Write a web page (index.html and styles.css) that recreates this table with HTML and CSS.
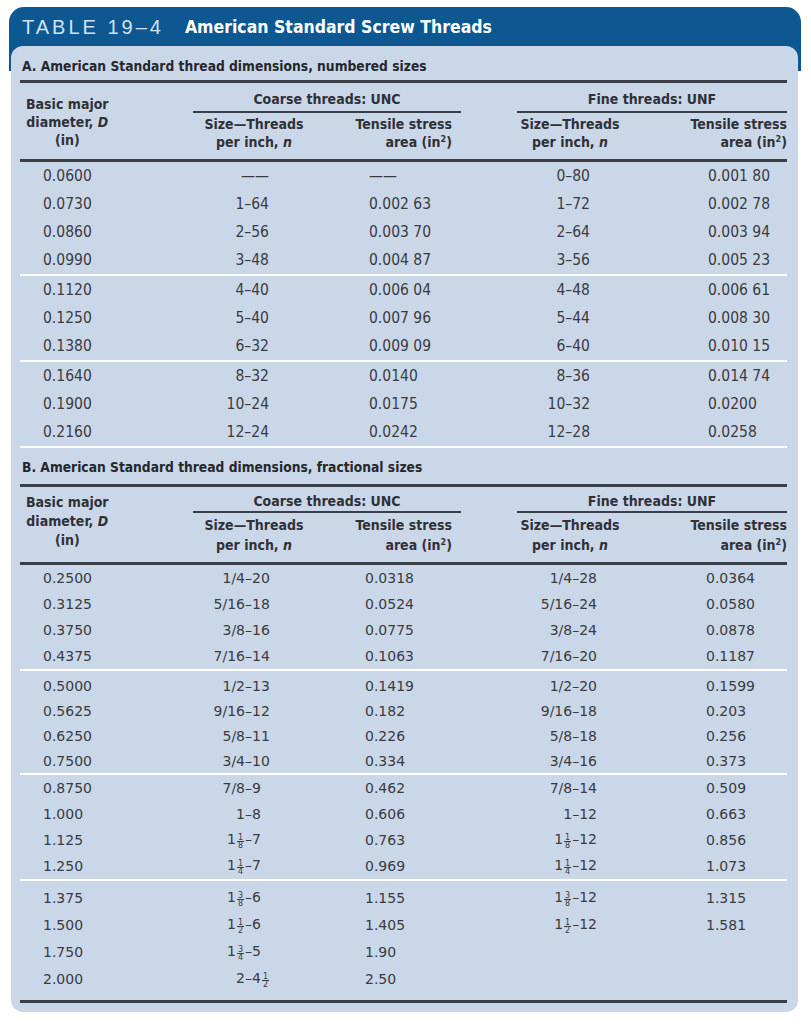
FILE: index.html
```html
<!DOCTYPE html>
<html lang="en">
<head>
<meta charset="utf-8">
<title>TABLE 19–4 American Standard Screw Threads</title>
<link rel="stylesheet" href="styles.css">
</head>
<body>
<div class="card">
  <div class="title"><span class="tnum">TABLE 19–4</span><span class="tname">American Standard Screw Threads</span></div>
  <div class="panel">
    <section class="tbl tbl-a">
      <h2 class="sec">A. American Standard thread dimensions, numbered sizes</h2>
      <div class="head">
        <div class="h-basic"><div class="basic-txt">Basic major<br>diameter, <i>D</i><br>(in)</div></div>
        <div class="grp grp-c">
          <div class="grp-title">Coarse threads: UNC</div>
          <div class="subs"><div class="sub-size">Size—Threads<br>per inch, <i>n</i></div><div class="sub-area">Tensile stress<br>area (in<sup>2</sup>)</div></div>
        </div>
        <div class="grp grp-f">
          <div class="grp-title">Fine threads: UNF</div>
          <div class="subs"><div class="sub-size">Size—Threads<br>per inch, <i>n</i></div><div class="sub-area">Tensile stress<br>area (in<sup>2</sup>)</div></div>
        </div>
      </div>
      <div class="body">
        <div class="rows">
          <div class="row"><span class="c1">0.0600</span><span class="c2">——</span><span class="c3">——</span><span class="c4">0–80</span><span class="c5">0.001 80</span></div>
          <div class="row"><span class="c1">0.0730</span><span class="c2">1–64</span><span class="c3">0.002 63</span><span class="c4">1–72</span><span class="c5">0.002 78</span></div>
          <div class="row"><span class="c1">0.0860</span><span class="c2">2–56</span><span class="c3">0.003 70</span><span class="c4">2–64</span><span class="c5">0.003 94</span></div>
          <div class="row"><span class="c1">0.0990</span><span class="c2">3–48</span><span class="c3">0.004 87</span><span class="c4">3–56</span><span class="c5">0.005 23</span></div>
        </div>
        <div class="rows">
          <div class="row"><span class="c1">0.1120</span><span class="c2">4–40</span><span class="c3">0.006 04</span><span class="c4">4–48</span><span class="c5">0.006 61</span></div>
          <div class="row"><span class="c1">0.1250</span><span class="c2">5–40</span><span class="c3">0.007 96</span><span class="c4">5–44</span><span class="c5">0.008 30</span></div>
          <div class="row"><span class="c1">0.1380</span><span class="c2">6–32</span><span class="c3">0.009 09</span><span class="c4">6–40</span><span class="c5">0.010 15</span></div>
        </div>
        <div class="rows">
          <div class="row"><span class="c1">0.1640</span><span class="c2">8–32</span><span class="c3">0.0140</span><span class="c4">8–36</span><span class="c5">0.014 74</span></div>
          <div class="row"><span class="c1">0.1900</span><span class="c2">10–24</span><span class="c3">0.0175</span><span class="c4">10–32</span><span class="c5">0.0200</span></div>
          <div class="row"><span class="c1">0.2160</span><span class="c2">12–24</span><span class="c3">0.0242</span><span class="c4">12–28</span><span class="c5">0.0258</span></div>
        </div>
      </div>
    </section>

    <section class="tbl tbl-b">
      <h2 class="sec">B. American Standard thread dimensions, fractional sizes</h2>
      <div class="head">
        <div class="h-basic"><div class="basic-txt">Basic major<br>diameter, <i>D</i><br>(in)</div></div>
        <div class="grp grp-c">
          <div class="grp-title">Coarse threads: UNC</div>
          <div class="subs"><div class="sub-size">Size—Threads<br>per inch, <i>n</i></div><div class="sub-area">Tensile stress<br>area (in<sup>2</sup>)</div></div>
        </div>
        <div class="grp grp-f">
          <div class="grp-title">Fine threads: UNF</div>
          <div class="subs"><div class="sub-size">Size—Threads<br>per inch, <i>n</i></div><div class="sub-area">Tensile stress<br>area (in<sup>2</sup>)</div></div>
        </div>
      </div>
      <div class="body">
        <div class="rows g1">
          <div class="row"><span class="c1">0.2500</span><span class="c2"><span class="l">1/4</span>–20</span><span class="c3">0.0318</span><span class="c4">1/4–28</span><span class="c5">0.0364</span></div>
          <div class="row"><span class="c1">0.3125</span><span class="c2"><span class="l">5/16</span>–18</span><span class="c3">0.0524</span><span class="c4">5/16–24</span><span class="c5">0.0580</span></div>
          <div class="row"><span class="c1">0.3750</span><span class="c2"><span class="l">3/8</span>–16</span><span class="c3">0.0775</span><span class="c4">3/8–24</span><span class="c5">0.0878</span></div>
          <div class="row"><span class="c1">0.4375</span><span class="c2"><span class="l">7/16</span>–14</span><span class="c3">0.1063</span><span class="c4">7/16–20</span><span class="c5">0.1187</span></div>
        </div>
        <div class="rows g2">
          <div class="row"><span class="c1">0.5000</span><span class="c2"><span class="l">1/2</span>–13</span><span class="c3">0.1419</span><span class="c4">1/2–20</span><span class="c5">0.1599</span></div>
          <div class="row"><span class="c1">0.5625</span><span class="c2"><span class="l">9/16</span>–12</span><span class="c3">0.182</span><span class="c4">9/16–18</span><span class="c5">0.203</span></div>
          <div class="row"><span class="c1">0.6250</span><span class="c2"><span class="l">5/8</span>–11</span><span class="c3">0.226</span><span class="c4">5/8–18</span><span class="c5">0.256</span></div>
          <div class="row"><span class="c1">0.7500</span><span class="c2"><span class="l">3/4</span>–10</span><span class="c3">0.334</span><span class="c4">3/4–16</span><span class="c5">0.373</span></div>
        </div>
        <div class="rows g3">
          <div class="row"><span class="c1">0.8750</span><span class="c2"><span class="l">7/8</span>–9</span><span class="c3">0.462</span><span class="c4">7/8–14</span><span class="c5">0.509</span></div>
          <div class="row"><span class="c1">1.000</span><span class="c2"><span class="l">1</span>–8</span><span class="c3">0.606</span><span class="c4">1–12</span><span class="c5">0.663</span></div>
          <div class="row"><span class="c1">1.125</span><span class="c2"><span class="l">1<span class="frac"><span>1</span><span>8</span></span></span>–7</span><span class="c3">0.763</span><span class="c4">1<span class="frac"><span>1</span><span>8</span></span>–12</span><span class="c5">0.856</span></div>
          <div class="row"><span class="c1">1.250</span><span class="c2"><span class="l">1<span class="frac"><span>1</span><span>4</span></span></span>–7</span><span class="c3">0.969</span><span class="c4">1<span class="frac"><span>1</span><span>4</span></span>–12</span><span class="c5">1.073</span></div>
        </div>
        <div class="rows g4">
          <div class="row"><span class="c1">1.375</span><span class="c2"><span class="l">1<span class="frac"><span>3</span><span>8</span></span></span>–6</span><span class="c3">1.155</span><span class="c4">1<span class="frac"><span>3</span><span>8</span></span>–12</span><span class="c5">1.315</span></div>
          <div class="row"><span class="c1">1.500</span><span class="c2"><span class="l">1<span class="frac"><span>1</span><span>2</span></span></span>–6</span><span class="c3">1.405</span><span class="c4">1<span class="frac"><span>1</span><span>2</span></span>–12</span><span class="c5">1.581</span></div>
          <div class="row"><span class="c1">1.750</span><span class="c2"><span class="l">1<span class="frac"><span>3</span><span>4</span></span></span>–5</span><span class="c3">1.90</span><span class="c4"></span><span class="c5"></span></div>
          <div class="row"><span class="c1">2.000</span><span class="c2"><span class="l">2</span>–4<span class="frac"><span>1</span><span>2</span></span></span><span class="c3">2.50</span><span class="c4"></span><span class="c5"></span></div>
        </div>
      </div>
    </section>
  </div>
</div>
</body>
</html>
```

FILE: styles.css
```css
* { box-sizing: border-box; }
body { margin: 0; background: #fff; }

.card {
  margin: 7px 0 0 9px;
  width: 792px;
  padding: 0 3px 0 2px;
  background: linear-gradient(#0d5891 0, #0d5891 64px, transparent 64px);
  border-radius: 15px 15px 0 0;
}
.title {
  height: 39px;
  display: flex;
  align-items: center;
  padding-left: 11px;
  padding-top: 1px;
}
.tnum {
  font-family: "Liberation Sans", sans-serif;
  font-size: 20px;
  letter-spacing: 3px;
  color: #d2e2f1;
}
.tname {
  margin-left: 21px;
  font-family: "DejaVu Sans Condensed", "DejaVu Sans", sans-serif;
  font-stretch: condensed;
  font-weight: bold;
  font-size: 17.5px;
  color: #ffffff;
}

.panel {
  background: #cad7e9;
  border-radius: 12px;
  padding: 11px 11px 9px 9px;
  color: #2e2f33;
}

.sec {
  margin: 0 0 5px 2px;
  font-family: "DejaVu Sans Condensed", "DejaVu Sans", sans-serif;
  font-stretch: condensed;
  font-weight: bold;
  font-size: 13.7px;
  line-height: 18px;
  color: #26272b;
}
.tbl-b .sec { margin-top: 10px; margin-bottom: 8px; }

.head {
  display: grid;
  grid-template-columns: 173px 268px 1fr;
  border-top: 3px solid #3b3e46;
  border-bottom: 3px solid #3b3e46;
  font-family: "DejaVu Sans Condensed", "DejaVu Sans", sans-serif;
  font-stretch: condensed;
  font-weight: bold;
  font-size: 14px;
  color: #303136;
}
.head i { font-style: italic; }
.head sup { font-size: 9px; line-height: 0; vertical-align: 5px; }
.h-basic { padding: 12px 0 0 6px; line-height: 18px; }
.basic-txt { display: inline-block; text-align: center; }
.grp-f { margin-left: 56px; }
.grp-title {
  text-align: center;
  padding: 7px 0 3px;
  line-height: 18px;
  border-bottom: 2px solid #3b3e46;
}
.subs {
  display: grid;
  margin-top: 2px;
  padding-bottom: 8px;
  line-height: 18px;
}
.grp-c .subs { grid-template-columns: 122px 1fr; }
.grp-f .subs { grid-template-columns: 106px 1fr; }
.sub-size { text-align: center; }
.sub-area { text-align: right; }
.grp-c .sub-area { padding-right: 9px; }

.tbl-b .h-basic { padding-top: 6px; line-height: 19px; }
.tbl-b .grp-title { padding: 5px 0 1px; }
.tbl-b .subs { line-height: 20px; padding-bottom: 7px; }

.body { border-bottom: 2px solid #ffffff; }
.rows + .rows { border-top: 2px solid #ffffff; }
.row {
  display: grid;
  align-items: center;
  white-space: nowrap;
  color: #3a3b40;
}
.row > span { line-height: 16px; }
.tbl-a .row {
  height: 28px;
  grid-template-columns: 160px 89px 221px 100px 1fr;
  font-family: "DejaVu Sans Condensed", "DejaVu Sans", sans-serif;
  font-stretch: condensed;
  font-size: 15.5px;
}
.tbl-a .c1 { padding-left: 23px; }
.tbl-a .c2 { text-align: right; }
.tbl-a .c3 { padding-left: 100px; }
.tbl-a .c4 { text-align: right; }
.tbl-a .c5 { padding-left: 118px; }

.tbl-b .body { border-bottom: 3px solid #3b3e46; padding-bottom: 8px; }
.tbl-b .row {
  grid-template-columns: 160px 100px 200px 117px 1fr;
  font-family: "DejaVu Sans", sans-serif;
  font-size: 14px;
}
.tbl-b .g1 .row { height: 26px; }
.tbl-b .g2 { padding-top: 2px; }
.tbl-b .g2 .row { height: 25px; }
.tbl-b .g3 .row { height: 26px; }
.tbl-b .g4 { padding-top: 3px; }
.tbl-b .g4 .row { height: 27px; }
.tbl-b .c1 { padding-left: 23px; }
.tbl-b .c2 .l { display: inline-block; width: 65px; text-align: right; }
.tbl-b .c3 { padding-left: 85px; }
.tbl-b .c4 { text-align: right; }
.tbl-b .c5 { padding-left: 109px; }

.frac {
  display: inline-flex;
  flex-direction: column;
  align-items: center;
  font-size: 8px;
  line-height: 7px;
  vertical-align: 4px;
  margin: 0 1px;
}
.frac span:first-child { border-bottom: 1px solid currentColor; padding: 0 1px; }
```
